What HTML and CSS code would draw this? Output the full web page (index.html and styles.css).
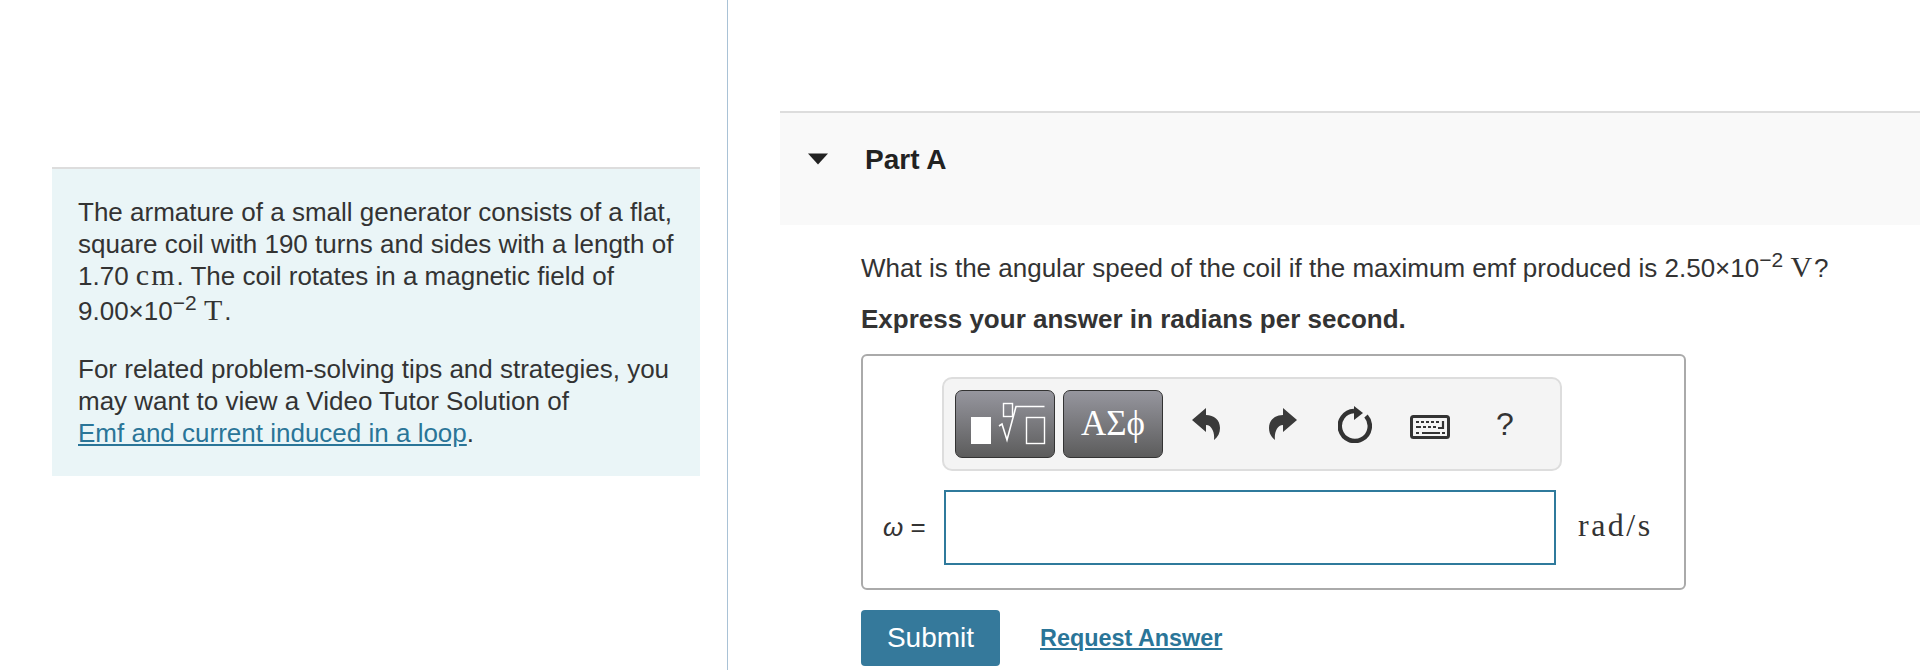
FILE: index.html
```html
<!DOCTYPE html>
<html lang="en">
<head>
    <meta charset="UTF-8">
    <title>Part A</title>
    <link rel="stylesheet" href="styles.css">
</head>
<body>
    <div class="page">
        <div class="left-col">
            <div class="intro">
                <p>The armature of a small generator consists of a flat, square coil with 190 turns and sides with a length of 1.70 <span class="math">cm</span>. The coil rotates in a magnetic field of 9.00×10<sup>−2</sup> <span class="math">T</span>.</p>
                <p>For related problem-solving tips and strategies, you may want to view a Video Tutor Solution of<br><a href="#">Emf and current induced in a loop</a>.</p>
            </div>
        </div>

        <div class="right-col">
            <div class="part-header">
                <svg class="caret" width="22" height="12" viewBox="0 0 22 12"><path d="M1 0.5H21L11 11.5Z" fill="#222"/></svg>
                <h2>Part A</h2>
            </div>

            <div class="part-body">
                <p class="question">What is the angular speed of the coil if the maximum emf produced is 2.50×10<sup>−2</sup> <span class="math">V</span>?</p>
                <p class="instruction">Express your answer in radians per second.</p>

                <div class="answer-box">
                    <div class="toolbar">
                        <button class="tool-btn tool-templates" type="button">
                            <svg width="98" height="66" viewBox="0 0 98 66">
                                <rect x="15" y="26" width="20" height="27" fill="#fff"/>
                                <rect x="47.500" y="12.500" width="9" height="13" fill="none" stroke="#fff" stroke-width="1.400"/>
                                <path d="M43 35L46 33L51 49L60 15.500H88.500" fill="none" stroke="#fff" stroke-width="1.600"/>
                                <rect x="70.500" y="26.500" width="18" height="26" fill="none" stroke="#fff" stroke-width="1.400"/>
                            </svg>
                        </button>
                        <button class="tool-btn tool-symbols" type="button">ΑΣϕ</button>
                        <div class="tool-icons">
                            <svg class="icon-undo" width="28" height="32" viewBox="0 0 28 32"><path d="M0 12L14 0V7C22 7 28 12 28 20C28 25 26 29 22 32C23 25 20 17 14 17V24Z" fill="#3a3a3a"/></svg>
                            <svg class="icon-redo" width="28" height="32" viewBox="0 0 28 32"><path d="M28 12L14 0V7C6 7 0 12 0 20C0 25 2 29 6 32C5 25 8 17 14 17V24Z" fill="#3a3a3a"/></svg>
                            <svg class="icon-reload" width="34" height="37" viewBox="0 0 34 37"><path d="M16 5A15 15 0 1 0 28 10" fill="none" stroke="#333" stroke-width="4.500"/><path d="M16 0L25 7L16 14Z" fill="#333"/></svg>
                            <svg class="icon-keyboard" width="40" height="24" viewBox="0 0 40 24">
                                <rect x="1.500" y="1.500" width="37" height="21" rx="2" fill="none" stroke="#333" stroke-width="3"/>
                                <path d="M6 7h3M11 7h3M16 7h3M21 7h3M26 7h3M6 12h5M13 12h3M18 12h3M23 12h3M33 6v7h-5M6 18h3M12 18h18M32 18h3" stroke="#333" stroke-width="2.200" fill="none"/>
                            </svg>
                            <span class="tool-help">?</span>
                        </div>
                    </div>

                    <div class="answer-row">
                        <label class="answer-label" for="answer"><i>ω</i> =</label>
                        <input class="answer-input" id="answer" type="text">
                        <span class="answer-unit">rad/s</span>
                    </div>
                </div>

                <div class="actions">
                    <button class="submit-btn" type="button">Submit</button>
                    <a class="request-link" href="#">Request Answer</a>
                </div>
            </div>
        </div>
    </div>
</body>
</html>
```

FILE: styles.css
```css
html, body {
    margin: 0;
    height: 670px;
    overflow: hidden;
    background-color: white;
}

body {
    font-family: "Liberation Sans", Arial, sans-serif;
    font-size: 26px;
    color: #333;
}

.page {
    display: flex;
    height: 670px;
}

.left-col {
    box-sizing: border-box;
    width: 728px;
    padding: 167px 27px 0 52px;
    border-right: 1px solid #a9c2d6;
}

.intro {
    padding: 27px 26px 27px;
    background-color: #eaf5f7;
    border-top: 2px solid #dddddd;
    line-height: 32px;
}

.intro p {
    margin: 0 0 26px;
}

.intro p:last-child {
    margin-bottom: 0;
}

.intro a {
    color: #2a7598;
}

sup {
    font-size: 21px;
    line-height: 0;
}

.intro sup {
    line-height: 22px;
}

.math {
    font-family: "Liberation Serif", serif;
    font-size: 30px;
    line-height: 0;
    letter-spacing: 2px;
}

.right-col {
    flex: 1;
    padding-top: 111px;
    padding-left: 52px;
}

.part-header {
    display: flex;
    align-items: flex-start;
    height: 112px;
    padding: 0 0 0 27px;
    background-color: #f9f9f9;
    border-top: 2px solid #dddddd;
}

.caret {
    margin-top: 40px;
}

.part-header h2 {
    margin: 31px 0 0 36px;
    font-size: 28px;
    line-height: 32px;
    color: #222;
}

.part-body {
    padding: 27px 0 0 81px;
}

.question {
    margin: 0;
    line-height: 32px;
}

.instruction {
    margin: 19px 0 0;
    font-weight: bold;
    line-height: 32px;
}

.answer-box {
    box-sizing: border-box;
    width: 825px;
    height: 236px;
    margin-top: 19px;
    padding: 21px 26px 0 20px;
    border: 2px solid #aaaaaa;
    border-radius: 6px;
}

.toolbar {
    display: flex;
    align-items: center;
    gap: 8px;
    box-sizing: border-box;
    width: 620px;
    height: 94px;
    margin-left: 59px;
    padding: 0 11px;
    background-color: #f4f4f4;
    border: 2px solid #dddddd;
    border-radius: 10px;
}

.tool-btn {
    height: 68px;
    padding: 0;
    color: white;
    background: linear-gradient(#96969e, #5c5c5c);
    border: 1px solid #333;
    border-radius: 7px;
}

.tool-templates {
    width: 100px;
}

.tool-templates svg {
    display: block;
}

.tool-symbols {
    width: 100px;
    font-family: "Liberation Serif", serif;
    font-size: 35px;
}

.tool-icons {
    display: flex;
    align-items: center;
    flex: 1;
    margin-left: 21px;
}

.icon-undo {
    flex: none;
    margin-right: 49px;
}

.icon-redo {
    flex: none;
    margin-right: 41px;
}

.icon-reload {
    flex: none;
    margin-right: 38px;
}

.icon-keyboard {
    flex: none;
    margin-top: 6px;
}

.tool-help {
    margin-left: 46px;
    font-size: 32px;
    color: #333;
}

.answer-row {
    display: flex;
    align-items: center;
    margin-top: 19px;
}

.answer-label {
    flex: none;
    width: 61px;
    font-size: 26px;
}

.answer-input {
    box-sizing: border-box;
    width: 612px;
    height: 75px;
    border: 2px solid #2f7a9c;
}

.answer-unit {
    margin: 0 0 5px 22px;
    font-family: "Liberation Serif", serif;
    font-size: 32px;
    letter-spacing: 2.500px;
}

.actions {
    display: flex;
    align-items: center;
    margin-top: 20px;
}

.submit-btn {
    width: 139px;
    height: 56px;
    color: white;
    font-family: "Liberation Sans", Arial, sans-serif;
    font-size: 28px;
    background-color: #35799b;
    border: none;
    border-radius: 4px;
}

.request-link {
    margin-left: 40px;
    font-size: 23.400px;
    font-weight: bold;
    color: #2a7598;
}
```
